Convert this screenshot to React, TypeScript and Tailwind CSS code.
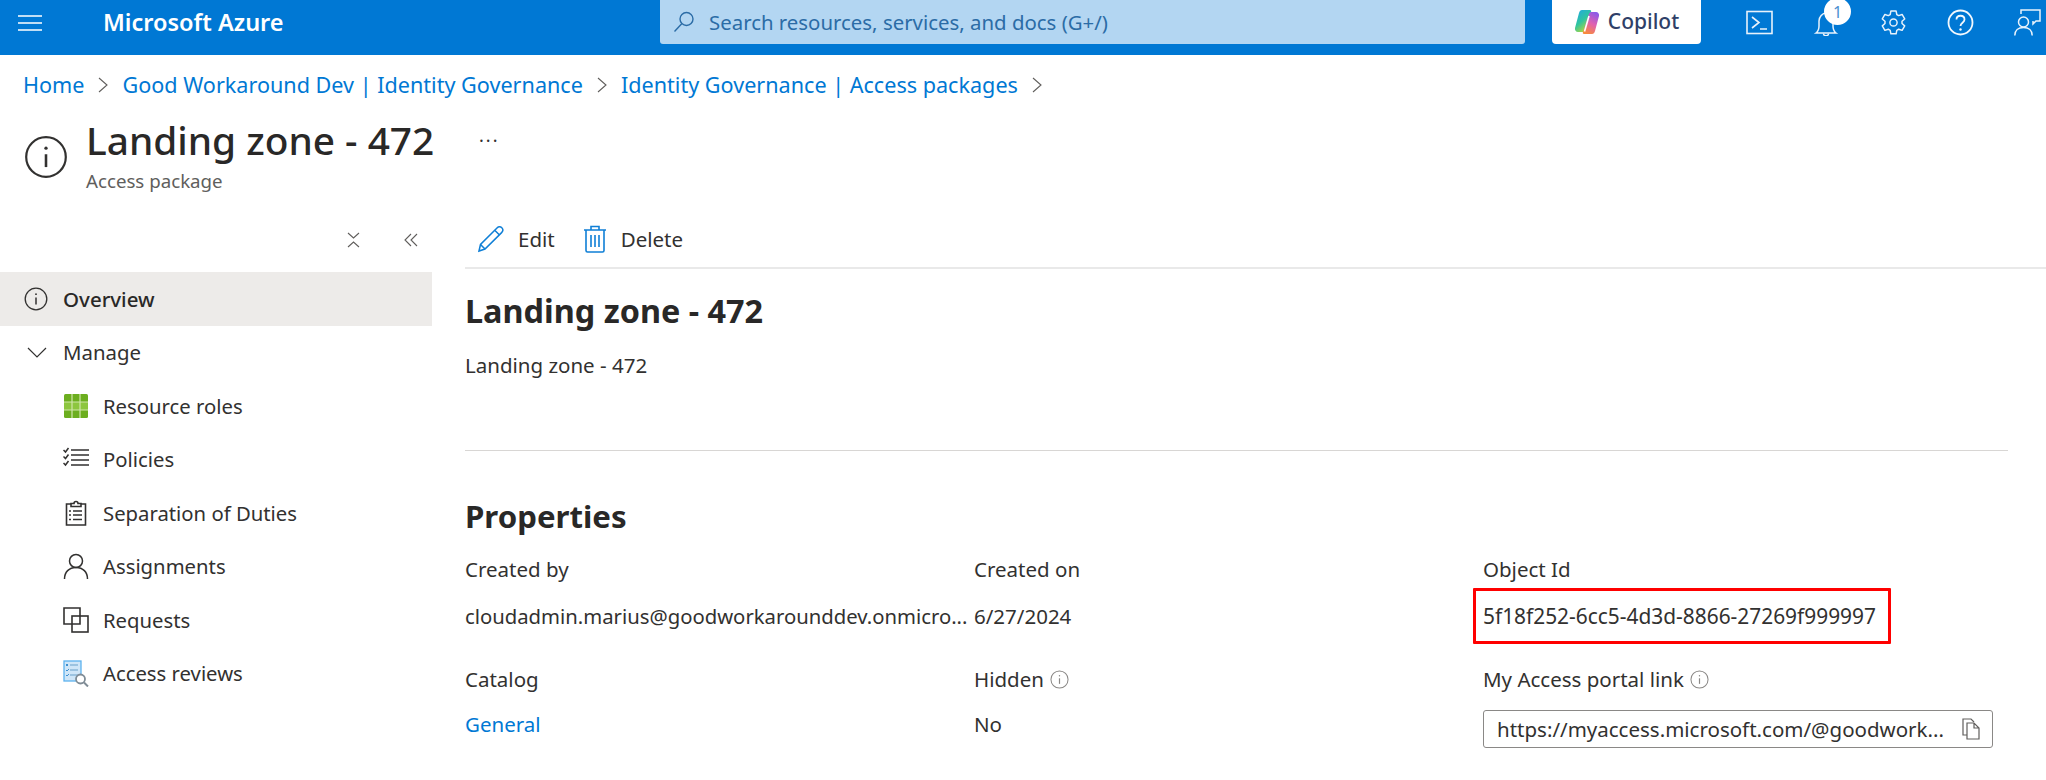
import React from 'react';

const font = { fontFamily: '"Noto Sans", "Open Sans", sans-serif' };

function InfoIcon({ size = 24, color = '#323130', stroke = 1.3 }: { size?: number; color?: string; stroke?: number }) {
  return (
    <svg width={size} height={size} viewBox="0 0 24 24" fill="none" stroke={color} strokeWidth={stroke} className="flex-shrink-0">
      <circle cx="12" cy="12" r="10.8" />
      <path d="M12 10.5v7" strokeWidth={stroke + 0.2} />
      <circle cx="12" cy="7.2" r="0.9" fill={color} stroke="none" />
    </svg>
  );
}

function ResourceRolesIcon() {
  return (
    <svg width="26" height="26" viewBox="0 0 26 26">
      <rect x="1" y="1" width="24" height="24" rx="1.5" fill="#6cae1f" />
      <rect x="1" y="9" width="24" height="8" fill="#8dc63f" />
      <path d="M9 1v24M17 1v24M1 9h24M1 17h24" stroke="#cfe5a8" strokeWidth="1.2" />
    </svg>
  );
}

function PoliciesIcon() {
  return (
    <svg width="26" height="26" viewBox="0 0 26 26" fill="none" stroke="#323130">
      <path d="M8 4h18M8 9h18M8 14h18M8 19h18" strokeWidth="1.6" />
      <path d="M0.500 4l2 2 3-4M0.500 10.500l2 2 3-4M0.500 17l2 2 3-4" strokeWidth="1.5" />
    </svg>
  );
}

function ClipboardIcon() {
  return (
    <svg width="26" height="26" viewBox="0 0 26 26" fill="none" stroke="#323130" strokeWidth="1.6">
      <path d="M8 4H3.500v21h19V4H18" />
      <path d="M8 6.500V3.500h3a2 2 0 0 1 4 0h3v3z" />
      <path d="M10 11h9M10 15h9M10 19.500h9" />
      <path d="M6 11h2M6 15h2M6 19.500h2" />
    </svg>
  );
}

function PersonIcon() {
  return (
    <svg width="26" height="26" viewBox="0 0 26 26" fill="none" stroke="#323130" strokeWidth="1.5">
      <circle cx="13" cy="8" r="6.500" />
      <path d="M1.500 26c0-7 4.500-11.500 11.500-11.500S24.500 19 24.500 26" />
    </svg>
  );
}

function RequestsIcon() {
  return (
    <svg width="26" height="26" viewBox="0 0 26 26" fill="none" stroke="#323130" strokeWidth="1.6">
      <path d="M9 17H1V1h16v8" />
      <rect x="9" y="9" width="16" height="16" />
      <path d="M9 17h8V9" />
    </svg>
  );
}

function AccessReviewIcon() {
  return (
    <svg width="27" height="27" viewBox="0 0 27 27" fill="none">
      <rect x="1" y="1" width="17" height="20" fill="#cfe6f8" stroke="#5db2ee" strokeWidth="1.300" />
      <path d="M7 5h8M7 10h8M7 15h8" stroke="#8cb8d8" strokeWidth="1.400" />
      <path d="M3 4l2 2M5 4l-2 2M3 10l1 1 2-2M3 15l1 1 2-2" stroke="#3c8fd0" strokeWidth="1" />
      <circle cx="17.500" cy="19" r="4.500" fill="#fff" stroke="#7f8c96" strokeWidth="1.800" />
      <path d="M21 22.500l4 4" stroke="#7f8c96" strokeWidth="2" />
    </svg>
  );
}

function CopilotLogo() {
  return (
    <svg width="26" height="26" viewBox="0 0 26 26">
      <defs>
        <linearGradient id="cpA" x1="0" y1="0" x2="0.6" y2="1">
          <stop offset="0" stopColor="#1fa6e8" />
          <stop offset="0.55" stopColor="#2fc4a0" />
          <stop offset="1" stopColor="#b8d838" />
        </linearGradient>
        <linearGradient id="cpB" x1="0.7" y1="0" x2="0.3" y2="1">
          <stop offset="0" stopColor="#8a5ce8" />
          <stop offset="0.5" stopColor="#e060b0" />
          <stop offset="1" stopColor="#f88a3c" />
        </linearGradient>
      </defs>
      <path d="M8 1h8c1 0 1.500 1 1 2L11 21c-.5 1.500-1.500 2-3 2H4c-2 0-3.500-2-3-4L5 4c.5-2 1.500-3 3-3z" fill="url(#cpA)" />
      <path d="M18 25h-8c-1 0-1.500-1-1-2l6-18c.5-1.500 1.500-2 3-2h4c2 0 3.500 2 3 4l-4 15c-.5 2-1.500 3-3 3z" fill="url(#cpB)" />
      <path d="M10.500 22.500L15 7" stroke="#fff" strokeWidth="1.600" />
    </svg>
  );
}

function TopBar() {
  return (
    <header className="flex items-center h-[55px] bg-[#0078d4] flex-shrink-0">
      <div className="w-[103px] pl-[18px] flex-shrink-0 mb-[10px]">
        <svg width="24" height="18" viewBox="0 0 24 18" stroke="#fff" strokeWidth="1.500" className="block">
          <path d="M0 2h24M0 9h24M0 16h24" />
        </svg>
      </div>
      <div className="w-[557px] flex-shrink-0 text-white text-[23.500px] font-semibold leading-none pb-[9px]">Microsoft Azure</div>
      <div className="w-[865px] h-[44px] self-start flex items-center rounded-b-[3px] bg-[#b3d6f2] flex-shrink-0 pl-[13px]">
        <svg width="22" height="22" viewBox="0 0 22 22" fill="none" stroke="#2b6ca6" strokeWidth="1.400">
          <circle cx="13.500" cy="8" r="6.500" />
          <path d="M8.700 12.800L1.500 20.500" />
        </svg>
        <span className="ml-[14px] text-[20.400px] text-[#2b6ca6]">Search resources, services, and docs (G+/)</span>
      </div>
      <div className="ml-[27px] w-[149px] h-[44px] self-start flex items-center justify-center gap-[8px] rounded-b-[4px] bg-white flex-shrink-0">
        <CopilotLogo />
        <span className="text-[21px] font-medium text-[#2f3f68]">Copilot</span>
      </div>
      <div className="flex items-center ml-[45px] gap-[40px] flex-shrink-0 mb-[11px]">
        <svg width="27" height="27" viewBox="0 0 27 27" fill="none" stroke="#e8f2fb" strokeWidth="1.600">
          <rect x="1" y="2.500" width="25" height="22" />
          <path d="M6 8l7 5.500L6 19M14 20h7" />
        </svg>
        <div className="relative w-[27px] h-[27px]">
          <svg width="27" height="27" viewBox="0 0 27 27" fill="none" stroke="#e8f2fb" strokeWidth="1.500">
            <path d="M3 24c2-1.500 3-3.500 3-7v-5c0-4 3.500-8 7-8s7 4 7 8v5c0 3.500 1 5.500 3 7z" />
            <path d="M10.500 24.500c0 3 5 3 5 0" />
          </svg>
          <div className="absolute -top-[11px] left-[11px] w-[27px] h-[27px] rounded-full bg-white text-[#4a90d0] text-[16px] flex items-center justify-center leading-none pt-[2px]">1</div>
        </div>
        <svg width="27" height="27" viewBox="0 0 24 24" fill="none" stroke="#e8f2fb" strokeWidth="1.300" strokeLinejoin="round">
          <path d="M9.670 1.800h4.660l.6 3.100 1.700.98 3-1.040 2.330 4.030-2.400 2.070v1.960l2.400 2.070-2.330 4.030-3-1.040-1.700.98-.6 3.100H9.670l-.6-3.100-1.700-.98-3 1.040-2.330-4.030 2.400-2.070v-1.960l-2.400-2.070 2.330-4.030 3 1.040 1.700-.98z" />
          <circle cx="12" cy="12" r="3.200" />
        </svg>
        <svg width="27" height="27" viewBox="0 0 27 27" fill="none" stroke="#f2f8fd" strokeWidth="1.800">
          <circle cx="13.500" cy="13.500" r="12" />
          <path d="M9.500 10.500c0-5 8-5 8 0 0 3.200-4 3.200-4 6.500" />
          <circle cx="13.500" cy="20.500" r="1.200" fill="#f2f8fd" stroke="none" />
        </svg>
        <svg width="27" height="27" viewBox="0 0 27 27" fill="none" stroke="#e8f2fb" strokeWidth="1.500">
          <path d="M7 5V1h19v11h-4l-3 3v-3" />
          <circle cx="9.500" cy="13" r="5" />
          <path d="M0.800 26.500c0-5 3.500-8 8.700-8s8.700 3 8.700 8" />
        </svg>
      </div>
    </header>
  );
}

function Chevron() {
  return (
    <svg width="12" height="18" viewBox="0 0 12 18" fill="none" stroke="#605e5c" strokeWidth="1.100" className="flex-shrink-0">
      <path d="M2 2l8 7-8 7" />
    </svg>
  );
}

function Breadcrumb() {
  return (
    <nav className="flex items-center h-[60px] pl-[23px] text-[21.600px] text-[#0078d4] flex-shrink-0">
      <span>Home</span>
      <span className="mx-[13px]"><Chevron /></span>
      <span>Good Workaround Dev | Identity Governance</span>
      <span className="mx-[13px]"><Chevron /></span>
      <span>Identity Governance | Access packages</span>
      <span className="mx-[13px]"><Chevron /></span>
    </nav>
  );
}

function PageTitle() {
  return (
    <div className="flex pl-[24px] h-[93px] flex-shrink-0">
      <div className="pt-[20px] w-[62px]"><InfoIcon size={44} stroke={1.2} color="#323130" /></div>
      <div className="w-[393px] pt-[2px]">
        <div className="text-[38.800px] leading-[46px] text-[#292827] font-medium">Landing zone - 472</div>
        <div className="text-[18.700px] leading-[26px] text-[#605e5c] mt-[5px]">Access package</div>
      </div>
      <div className="pt-[16px] text-[18px] tracking-[2px] text-[#323130] leading-none">···</div>
    </div>
  );
}

const manageItems = [
  { label: 'Resource roles', icon: <ResourceRolesIcon /> },
  { label: 'Policies', icon: <PoliciesIcon /> },
  { label: 'Separation of Duties', icon: <ClipboardIcon /> },
  { label: 'Assignments', icon: <PersonIcon /> },
  { label: 'Requests', icon: <RequestsIcon /> },
  { label: 'Access reviews', icon: <AccessReviewIcon /> },
];

function Sidebar() {
  return (
    <aside className="w-[432px] flex-shrink-0">
      <div className="h-[64px] flex items-center justify-end pr-[14px] gap-[44px]">
        <svg width="13" height="16" viewBox="0 0 13 16" fill="none" stroke="#605e5c" strokeWidth="1.100">
          <path d="M1 1l5.500 5L12 1M1 15l5.500-5 5.500 5" />
        </svg>
        <svg width="14" height="14" viewBox="0 0 14 14" fill="none" stroke="#605e5c" strokeWidth="1.100">
          <path d="M7 1L1 7l6 6M13 1L7 7l6 6" />
        </svg>
      </div>
      <div className="h-[54px] bg-[#edebe9] flex items-center pl-[24px] gap-[15px] text-[20.500px] font-medium text-[#292827]">
        <InfoIcon size={24} stroke={1.3} />
        <span>Overview</span>
      </div>
      <div className="h-[53px] flex items-center pl-[27px] gap-[16px] text-[20.400px] text-[#323130]">
        <svg width="20" height="12" viewBox="0 0 20 12" fill="none" stroke="#323130" strokeWidth="1.200">
          <path d="M1 1l9 9 9-9" />
        </svg>
        <span>Manage</span>
      </div>
      {manageItems.map((item) => (
        <div key={item.label} className="h-[53.500px] flex items-center pl-[63px] text-[20.300px] text-[#323130]">
          <div className="w-[40px] flex-shrink-0">{item.icon}</div>
          <span>{item.label}</span>
        </div>
      ))}
    </aside>
  );
}

function Prop({ label, info, children }: { label: string; info?: boolean; children: React.ReactNode }) {
  return (
    <div>
      <div className="flex items-center gap-[6px] h-[26px] text-[#323130]">
        <span>{label}</span>
        {info && <InfoIcon size={19} color="#8a8886" stroke={1.3} />}
      </div>
      <div className="mt-[20px]">{children}</div>
    </div>
  );
}

function Main() {
  return (
    <main className="flex-1 min-w-0 pl-[33px] pr-[38px] text-[20.500px] leading-[28px] text-[#323130]">
      <div className="flex items-center h-[61px] pt-[2px] -mr-[38px] border-b-2 border-[#e9e9e9]">
        <svg width="28" height="28" viewBox="0 0 28 28" fill="none" stroke="#0f7fd6" strokeWidth="1.500" className="ml-[12px]">
          <path d="M2 26l1.500-6.500L20 3c1.500-1.500 3.500-1.500 4.800-.2s1.300 3.300-.2 4.800L8 24z" />
          <path d="M3.500 19.500L8 24M18 5.500l4.500 4.500" />
        </svg>
        <span className="ml-[13px]">Edit</span>
        <svg width="24" height="28" viewBox="0 0 24 28" fill="none" stroke="#0f7fd6" strokeWidth="1.600" className="ml-[28px]">
          <path d="M1 5h22M8 5V1.500h8V5M3 5v20.500c0 1 .5 1.500 1.500 1.500h15c1 0 1.500-.5 1.500-1.500V5" />
          <path d="M8 10v12M12 10v12M16 10v12" />
        </svg>
        <span className="ml-[14px]">Delete</span>
      </div>
      <h1 className="mt-[19px] text-[32.400px] leading-[44px] font-bold text-[#292827]">Landing zone - 472</h1>
      <p className="mt-[19px]">Landing zone - 472</p>
      <div className="mt-[71px] h-px bg-[#d8d6d4]" />
      <h2 className="mt-[43px] text-[31.200px] leading-[44px] font-bold text-[#292827]">Properties</h2>
      <div className="grid grid-cols-[509px_509px_1fr] gap-y-[36px] mt-[18px]">
        <Prop label="Created by">
          <div className="whitespace-nowrap text-[20.300px]">cloudadmin.marius@goodworkarounddev.onmicro...</div>
        </Prop>
        <Prop label="Created on">6/27/2024</Prop>
        <Prop label="Object Id">
          <div className="relative">
            <span className="text-[20.900px]">5f18f252-6cc5-4d3d-8866-27269f999997</span>
            <div className="absolute -left-[10px] -top-[14px] w-[418px] h-[56px] border-[3px] border-[#ff0000] rounded-[1px]" />
          </div>
        </Prop>
        <Prop label="Catalog">
          <div className="-mt-[2px] text-[#0078d4]">General</div>
        </Prop>
        <Prop label="Hidden" info>
          <div className="-mt-[2px]">No</div>
        </Prop>
        <Prop label="My Access portal link" info>
          <div className="-mt-[2px] w-[510px] h-[38px] border border-[#8a8886] rounded-[3px] flex items-center pl-[13px] pr-[12px]">
            <span className="flex-1 whitespace-nowrap">https://myaccess.microsoft.com/@goodwork...</span>
            <svg width="18" height="22" viewBox="0 0 18 22" fill="none" stroke="#605e5c" strokeWidth="1.200" className="flex-shrink-0">
              <path d="M5 17H1V1h8l3 3" />
              <path d="M5 5h7l5 5v11H5zM12 5v5h5" />
            </svg>
          </div>
        </Prop>
      </div>
    </main>
  );
}

export default function App() {
  return (
    <div className="w-[2046px] h-[780px] overflow-hidden bg-white flex flex-col" style={font}>
      <TopBar />
      <Breadcrumb />
      <PageTitle />
      <div className="flex flex-1 min-h-0">
        <Sidebar />
        <Main />
      </div>
    </div>
  );
}
